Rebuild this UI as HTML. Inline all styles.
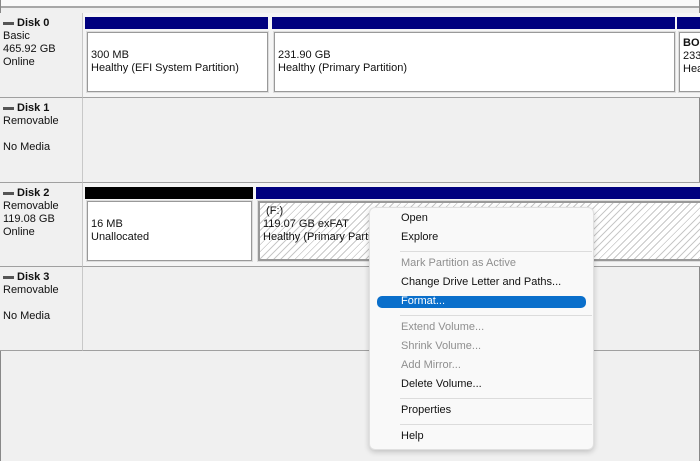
<!DOCTYPE html>
<html><head><style>
*{margin:0;padding:0;box-sizing:border-box}
body{width:700px;height:461px;background:#f0f0f0;font-family:"Liberation Sans",sans-serif;font-size:11px;color:#111;position:relative;overflow:hidden}
.a{position:absolute}
.lbl{position:absolute;left:0;width:83px;background:#f0f0f0;border-right:1px solid #c8c8c8;padding:4px 0 0 3px;line-height:13px;border-bottom:1px solid #a0a0a0}
.lbl b{font-weight:bold}
.dash{display:inline-block;width:11px;height:3px;background:#555;vertical-align:middle;margin-right:3px}
.row{position:absolute;left:83px;right:0;border-bottom:1px solid #a0a0a0}
.bar{position:absolute;height:12px;background:#00007e}
.box{position:absolute;background:#fff;border:1px solid #999;outline:1px solid #ddd;padding:16px 0 0 3px;line-height:13px}
.mi{position:absolute;left:31px;font-size:11px;color:#111}
.dis{color:#8f8f8f}
.sep{position:absolute;left:30px;width:192px;height:1px;background:#dcdcdc}
</style></head><body>
<div class="a" style="left:0;top:0;width:700px;height:8px;background:#fafafa;border-bottom:2px solid #a8a8a8"></div>
<div class="a" style="left:0;top:0;width:1px;height:461px;background:#888"></div>
<div class="a" style="right:0;top:0;width:1px;height:461px;background:#888"></div>

<div class="lbl" style="top:13px;height:85px"><b><span class="dash"></span>Disk 0</b><br>Basic<br>465.92 GB<br>Online</div>
<div class="row" style="top:13px;height:85px;background:#f5f5f5"></div>
<div class="bar" style="left:85px;top:17px;width:183px"></div>
<div class="bar" style="left:272px;top:17px;width:403px"></div>
<div class="bar" style="left:677px;top:17px;width:23px"></div>
<div class="box" style="left:87px;top:32px;width:181px;height:60px">300 MB<br>Healthy (EFI System Partition)</div>
<div class="box" style="left:274px;top:32px;width:401px;height:60px">231.90 GB<br>Healthy (Primary Partition)</div>
<div class="box" style="left:679px;top:32px;width:30px;height:60px;padding-top:4px"><b>BOOT</b><br>233<br>Hea</div>

<div class="lbl" style="top:98px;height:85px"><b><span class="dash"></span>Disk 1</b><br>Removable<br><br>No Media</div>
<div class="row" style="top:98px;height:85px"></div>

<div class="lbl" style="top:183px;height:84px"><b><span class="dash"></span>Disk 2</b><br>Removable<br>119.08 GB<br>Online</div>
<div class="row" style="top:183px;height:84px;background:#f5f5f5"></div>
<div class="bar" style="left:85px;top:187px;width:168px;background:#000"></div>
<div class="bar" style="left:256px;top:187px;width:444px"></div>
<div class="box" style="left:87px;top:201px;width:165px;height:60px">16 MB<br>Unallocated</div>
<div class="box" style="left:258px;top:201px;width:450px;height:60px;padding-top:2px;background:repeating-linear-gradient(135deg,#fff 0 4px,#c8c8c8 4px 5px);border:2px solid #999">&nbsp;(F:)<br>119.07 GB exFAT<br>Healthy (Primary Partition)</div>

<div class="lbl" style="top:267px;height:84px"><b><span class="dash"></span>Disk 3</b><br>Removable<br><br>No Media</div>
<div class="row" style="top:267px;height:84px"></div>

<div class="a" style="left:369px;top:207px;width:225px;height:243px;background:#f9f9f9;border:1px solid #e0e0e0;border-radius:6px;box-shadow:0 2px 6px rgba(0,0,0,.2)">
<div class="mi" style="top:4px">Open</div>
<div class="mi" style="top:23px">Explore</div>
<div class="sep" style="top:43px"></div>
<div class="mi dis" style="top:49px">Mark Partition as Active</div>
<div class="mi" style="top:68px">Change Drive Letter and Paths...</div>
<div class="a" style="left:7px;top:88px;width:209px;height:12px;background:#0a6fcb;border-radius:5px"></div>
<div class="mi" style="top:87px;color:#fff">Format...</div>
<div class="sep" style="top:107px"></div>
<div class="mi dis" style="top:113px">Extend Volume...</div>
<div class="mi dis" style="top:132px">Shrink Volume...</div>
<div class="mi dis" style="top:151px">Add Mirror...</div>
<div class="mi" style="top:170px">Delete Volume...</div>
<div class="sep" style="top:190px"></div>
<div class="mi" style="top:196px">Properties</div>
<div class="sep" style="top:216px"></div>
<div class="mi" style="top:222px">Help</div>
</div>
</body></html>
